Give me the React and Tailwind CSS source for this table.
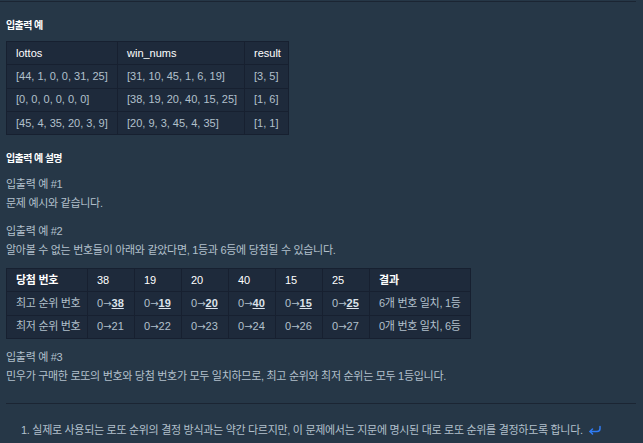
import React from 'react';

const sample = [
  ['[44, 1, 0, 0, 31, 25]', '[31, 10, 45, 1, 6, 19]', '[3, 5]'],
  ['[0, 0, 0, 0, 0, 0]', '[38, 19, 20, 40, 15, 25]', '[1, 6]'],
  ['[45, 4, 35, 20, 3, 9]', '[20, 9, 3, 45, 4, 35]', '[1, 1]'],
];

const picks = ['38', '19', '20', '40', '15', '25'];
const worst = ['21', '22', '23', '24', '26', '27'];

const cell = 'border border-[#172030] h-[23.3px] py-0 px-0 pl-[9px] text-left align-middle';
const ko = 'tracking-[-0.3px]';

const To = () => (
  <span style={{ fontFamily: '"DejaVu Sans", sans-serif' }} className="text-[10px]">→</span>
);

const Arrow = () => (
  <svg width="14" height="10" viewBox="0 0 14 10" className="inline-block ml-[5px] align-[-1px]">
    <path d="M12 1.5 V3.5 A3 3 0 0 1 9 6.5 H2" fill="none" stroke="#2f7cf6" strokeWidth="1.5" strokeLinecap="round" />
    <path d="M4.5 4 L2 6.5 L4.5 9" fill="none" stroke="#2f7cf6" strokeWidth="1.5" strokeLinecap="round" strokeLinejoin="round" />
  </svg>
);

export default function App() {
  return (
    <div
      className="w-full h-[443px] overflow-hidden bg-[#263747] text-[#b2c0cc] text-[11px] leading-[19px]"
      style={{ fontFamily: '"Liberation Sans", "Noto Sans CJK KR", sans-serif' }}
    >
      <div className="mt-px w-[636px] h-px bg-[#1b2533]" />

      <div className="pl-[6px]">
        <h5 className="mt-[14px] text-white font-bold text-[10px] tracking-[-0.6px]">입출력 예</h5>
        <table className="mt-[6px] border-collapse bg-[#1e2a3b]">
          <thead>
            <tr className="text-white">
              <td className={`${cell} w-[111px]`}>lottos</td>
              <td className={`${cell} w-[127px]`}>win_nums</td>
              <td className={`${cell} w-[44px]`}>result</td>
            </tr>
          </thead>
          <tbody>
            {sample.map((row) => (
              <tr key={row[0]}>
                {row.map((v) => (
                  <td key={v} className={cell}>{v}</td>
                ))}
              </tr>
            ))}
          </tbody>
        </table>

        <h5 className="mt-[14px] text-white font-bold text-[10px] tracking-[-0.6px]">입출력 예 설명</h5>

        <p className={`mt-[7px] ${ko}`}>입출력 예 #1</p>
        <p className={ko}>문제 예시와 같습니다.</p>

        <p className={`mt-[9px] ${ko}`}>입출력 예 #2</p>
        <p className={ko}>알아볼 수 없는 번호들이 아래와 같았다면, 1등과 6등에 당첨될 수 있습니다.</p>

        <table className="mt-[8px] border-collapse bg-[#1e2a3b]">
          <thead>
            <tr className="text-white">
              <td className={`${cell} w-[81px] font-bold ${ko}`}>당첨 번호</td>
              {picks.map((n) => (
                <td key={n} className={`${cell} w-[47px]`}>{n}</td>
              ))}
              <td className={`${cell} w-[101px] font-bold`}>결과</td>
            </tr>
          </thead>
          <tbody>
            <tr>
              <td className={`${cell} ${ko}`}>최고 순위 번호</td>
              {picks.map((n) => (
                <td key={n} className={cell}>
                  0<To /><u className="font-bold text-[#dbe3ea]">{n}</u>
                </td>
              ))}
              <td className={`${cell} ${ko}`}>6개 번호 일치, 1등</td>
            </tr>
            <tr>
              <td className={`${cell} ${ko}`}>최저 순위 번호</td>
              {worst.map((n) => (
                <td key={n} className={cell}>0<To />{n}</td>
              ))}
              <td className={`${cell} ${ko}`}>0개 번호 일치, 6등</td>
            </tr>
          </tbody>
        </table>

        <p className={`mt-[9px] ${ko}`}>입출력 예 #3</p>
        <p className={ko}>민우가 구매한 로또의 번호와 당첨 번호가 모두 일치하므로, 최고 순위와 최저 순위는 모두 1등입니다.</p>

        <hr className="mt-[17px] w-[630px] border-0 h-px bg-[#1b2533]" />

        <ol className="mt-[17px] pl-[15px]">
          <li className={ko}>
            1. 실제로 사용되는 로또 순위의 결정 방식과는 약간 다르지만, 이 문제에서는 지문에 명시된 대로 로또 순위를 결정하도록 합니다.
            <Arrow />
          </li>
        </ol>
      </div>
    </div>
  );
}
